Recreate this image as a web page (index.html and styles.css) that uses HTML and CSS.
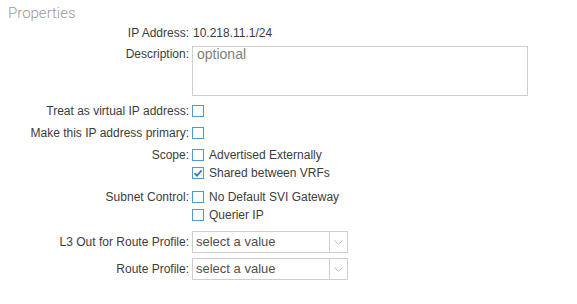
FILE: index.html
```html
<!DOCTYPE html>
<html>
<head>
<meta charset="utf-8">
<link rel="stylesheet" href="styles.css">
</head>
<body>
<div class="panel">
  <div class="title">Properties</div>
  <div class="form">
    <div class="row r-ip">
      <div class="label">IP Address:</div>
      <div class="ctrl value">10.218.11.1/24</div>
    </div>
    <div class="row r-desc">
      <div class="label top">Description:</div>
      <div class="ctrl"><div class="textarea">optional</div></div>
    </div>
    <div class="row r-check">
      <div class="label">Treat as virtual IP address:</div>
      <div class="ctrl"><span class="cb"></span></div>
    </div>
    <div class="row r-check">
      <div class="label">Make this IP address primary:</div>
      <div class="ctrl"><span class="cb"></span></div>
    </div>
    <div class="row r-group">
      <div class="label lh">Scope:</div>
      <div class="ctrl stack">
        <div class="opt"><span class="cb"></span><span>Advertised Externally</span></div>
        <div class="opt"><span class="cb checked"><svg viewBox="0 0 12 12" width="12" height="12"><path d="M2.6 6.2 L5 8.6 L9.6 3.4" fill="none" stroke="#2f7cc4" stroke-width="1.8"/></svg></span><span>Shared between VRFs</span></div>
      </div>
    </div>
    <div class="row r-group">
      <div class="label lh">Subnet Control:</div>
      <div class="ctrl stack">
        <div class="opt"><span class="cb"></span><span>No Default SVI Gateway</span></div>
        <div class="opt"><span class="cb"></span><span>Querier IP</span></div>
      </div>
    </div>
    <div class="row r-select first">
      <div class="label">L3 Out for Route Profile:</div>
      <div class="ctrl"><div class="select"><span class="sel-text">select a value</span><span class="sel-btn"><svg viewBox="0 0 12 8" width="11" height="7"><path d="M1 1.5 L6 6 L11 1.5" fill="none" stroke="#b8b8b8" stroke-width="1"/></svg></span></div></div>
    </div>
    <div class="row r-select">
      <div class="label">Route Profile:</div>
      <div class="ctrl"><div class="select"><span class="sel-text">select a value</span><span class="sel-btn"><svg viewBox="0 0 12 8" width="11" height="7"><path d="M1 1.5 L6 6 L11 1.5" fill="none" stroke="#b8b8b8" stroke-width="1"/></svg></span></div></div>
    </div>
  </div>
</div>
</body>
</html>
```

FILE: styles.css
```css
html, body {
  margin: 0;
  padding: 0;
  background: #ffffff;
}
body {
  font-family: "Liberation Sans", Arial, sans-serif;
  font-size: 12px;
  color: #3c3c3c;
}
.panel {
  padding: 3px 0 0 8px;
}
.title {
  font-family: Roboto, "Liberation Sans", sans-serif;
  font-weight: 300;
  font-size: 15px;
  line-height: 20px;
  color: #9a9a9a;
  height: 21px;
}
.form {
  display: flex;
  flex-direction: column;
}
.row {
  display: grid;
  grid-template-columns: 181px 1fr;
  column-gap: 3px;
  align-items: center;
}
.label {
  text-align: right;
  white-space: nowrap;
  color: #3c3c3c;
}
.label.top {
  align-self: start;
  padding-top: 1px;
  line-height: 14px;
}
.label.lh {
  align-self: start;
  line-height: 18px;
}
.r-ip {
  height: 18px;
  line-height: 18px;
}
.value {
  padding-left: 1px;
  color: #3c3c3c;
}
.r-desc {
  margin-top: 4px;
  align-items: start;
}
.textarea {
  box-sizing: border-box;
  width: 336px;
  height: 50px;
  border: 1px solid #cfcfcf;
  padding: 0 4px;
  font-size: 14px;
  line-height: 14px;
  color: #7f7f7f;
}
.r-check {
  height: 18px;
  margin-top: 6px;
}
.r-check + .r-check {
  margin-top: 4px;
}
.ctrl {
  display: flex;
  align-items: center;
}
.cb {
  box-sizing: border-box;
  display: inline-block;
  width: 12px;
  height: 12px;
  border: 1px solid #4d9ad8;
  background: #fff;
  position: relative;
  flex: none;
}
.cb svg {
  position: absolute;
  left: -1px;
  top: -1px;
}
.r-group {
  margin-top: 4px;
  align-items: start;
}
.r-group + .r-group {
  margin-top: 6px;
}
.stack {
  flex-direction: column;
  align-items: flex-start;
}
.opt {
  display: flex;
  align-items: center;
  height: 18px;
  gap: 5px;
  color: #3c3c3c;
}
.r-select {
  margin-top: 5px;
}
.r-select.first {
  margin-top: 7px;
}
.select {
  box-sizing: border-box;
  width: 156px;
  height: 22px;
  border: 1px solid #cfcfcf;
  display: flex;
  align-items: stretch;
}
.sel-text {
  flex: 1;
  padding-left: 3px;
  font-size: 13px;
  line-height: 20px;
  color: #4f4f4f;
}
.sel-btn {
  width: 17px;
  border-left: 1px solid #cfcfcf;
  display: flex;
  align-items: center;
  justify-content: center;
}
```
